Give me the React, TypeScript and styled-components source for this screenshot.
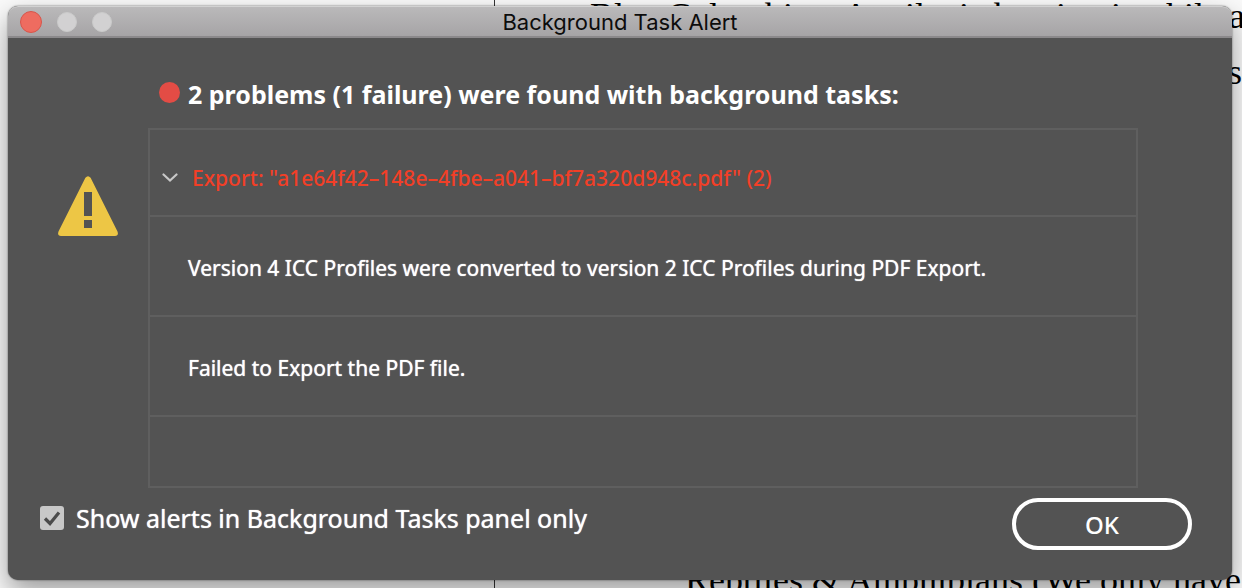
import React, { useState } from 'react';
import styled, { createGlobalStyle } from 'styled-components';

const GlobalStyle = createGlobalStyle`
  *, *::before, *::after { box-sizing: border-box; }
  body { margin: 0; background: #fafafa; }
`;

const Screen = styled.div`
  position: relative;
  min-height: 100vh;
  padding: 6px 10px 8px 8px;
  overflow: hidden;
  font-family: 'Noto Sans', 'Open Sans', sans-serif;
`;

/* The open document that the alert floats over. */
const Document = styled.div`
  position: absolute;
  inset: -12px 0 -20px 494px;
  display: flex;
  flex-direction: column;
  border-left: 1px solid #333;
  color: #000;
  font: 36px/56px 'Liberation Serif', serif;
  white-space: nowrap;
`;

const DocumentLine = styled.p<{ $indent?: number; $end?: boolean }>`
  margin: 0;
  padding-left: ${(p) => p.$indent ?? 0}px;
  text-align: ${(p) => (p.$end ? 'right' : 'left')};
`;

const DocumentHeading = styled(DocumentLine)`
  margin-top: auto;
`;

const Dialog = styled.section`
  position: relative;
  display: flex;
  flex-direction: column;
  border-radius: 10px;
  background: #535353;
  color: #fff;
  box-shadow: 0 0 2px rgba(0, 0, 0, 0.6), 0 12px 28px rgba(0, 0, 0, 0.38);
`;

const TitleBar = styled.header`
  display: grid;
  grid-template-columns: 1fr auto 1fr;
  align-items: center;
  height: 32px;
  padding: 0 12px;
  border-top: 1px solid #d2d2d2;
  border-bottom: 2px solid #8b898b;
  border-radius: 10px 10px 0 0;
  background: linear-gradient(#bab9ba, #a6a4a6);
`;

const WindowControls = styled.div`
  display: flex;
  align-items: center;
  gap: 15px;
`;

const WindowButton = styled.button<{ $close?: boolean }>`
  width: ${(p) => (p.$close ? 22 : 20)}px;
  height: ${(p) => (p.$close ? 22 : 20)}px;
  padding: 0;
  border: 1px solid ${(p) => (p.$close ? '#d8554b' : '#cacaca')};
  border-radius: 50%;
  background: ${(p) => (p.$close ? '#ee6c60' : '#d2d1d2')};
`;

const Title = styled.h1`
  margin: 0;
  color: #0c0c0c;
  font: 400 22px/28px Inter, sans-serif;
`;

const Content = styled.div`
  display: flex;
  gap: 30px;
  padding: 39px 94px 0 50px;
`;

const WarningIcon = styled.svg`
  flex: none;
  width: 60px;
  height: 60px;
  margin-top: 99px;
`;

const Main = styled.div`
  flex: 1;
  min-width: 0;
`;

const Summary = styled.h2`
  display: flex;
  align-items: center;
  gap: 8px;
  margin: 0 0 17px;
  padding-left: 11px;
  font-size: 25px;
  font-weight: 700;
  line-height: 34px;
`;

const StatusDot = styled.span`
  width: 21px;
  height: 21px;
  margin-bottom: 4px;
  border-radius: 50%;
  background: #e34c45;
`;

const ProblemList = styled.div`
  display: grid;
  grid-template-rows: 87px 100px 100px 69px;
  border: 2px solid #5f5f5f;
  font-size: 21px;
  line-height: 28px;
  text-shadow: 0 0 1px currentColor;
`;

const Row = styled.div`
  display: flex;
  align-items: center;
  padding: 4px 38px 0;
  border-bottom: 2px solid #5f5f5f;

  &:last-child { border-bottom: 0; }
`;

const TaskRow = styled(Row)`
  padding: 10px 12px 0;
`;

const TaskToggle = styled.button`
  display: flex;
  align-items: center;
  gap: 14px;
  padding: 0;
  border: 0;
  background: none;
  color: #f23f27;
  font: inherit;
  font-weight: 500;
  text-shadow: none;
`;

const Footer = styled.footer`
  display: flex;
  align-items: flex-start;
  justify-content: space-between;
  padding: 10px 40px 30px 32px;
`;

const CheckLabel = styled.label`
  display: flex;
  align-items: center;
  gap: 12px;
  padding-top: 3px;
  font-size: 25px;
  line-height: 34px;
  text-shadow: 0 0 1px currentColor;
`;

const CheckBox = styled.span`
  display: grid;

  > * { grid-area: 1 / 1; }
  svg { pointer-events: none; }
`;

const CheckInput = styled.input`
  appearance: none;
  width: 24px;
  height: 24px;
  margin: 0;
  border-radius: 3px;
  background: #c8c8c8;
`;

const OkButton = styled.button`
  width: 180px;
  height: 52px;
  padding: 2px 0 0;
  border: 4px solid #fff;
  border-radius: 26px;
  background: transparent;
  color: #fff;
  font: 500 24px/34px 'Noto Sans', sans-serif;
`;

export default function App() {
  const [open, setOpen] = useState(true);
  const [panelOnly, setPanelOnly] = useState(true);

  return (
    <Screen>
      <GlobalStyle />
      <Document>
        <DocumentLine $indent={95}>Blue Columbine, Aquilegia bearing it while a</DocumentLine>
        <DocumentLine $end>s</DocumentLine>
        <DocumentHeading $indent={190}>Reptiles &amp; Amphibians (We only have</DocumentHeading>
      </Document>

      <Dialog role="alertdialog" aria-labelledby="alert-title">
        <TitleBar>
          <WindowControls>
            <WindowButton $close aria-label="Close" />
            <WindowButton aria-label="Minimize" disabled />
            <WindowButton aria-label="Zoom" disabled />
          </WindowControls>
          <Title id="alert-title">Background Task Alert</Title>
        </TitleBar>

        <Content>
          <WarningIcon viewBox="0 0 60 60" aria-hidden="true">
            <path
              fill="#edc645"
              fillRule="evenodd"
              d="M27.4 1.8Q30-1.4 32.6 1.8L59.5 55.5Q61 60 57 60H3Q-1 60 .5 55.5ZM26 16V40H34V16ZM26 44V52H34V44Z"
            />
          </WarningIcon>
          <Main>
            <Summary>
              <StatusDot />
              2 problems (1 failure) were found with background tasks:
            </Summary>
            <ProblemList>
              <TaskRow>
                <TaskToggle aria-expanded={open} onClick={() => setOpen(!open)}>
                  <svg width="16" height="10" viewBox="0 0 16 10" aria-hidden="true">
                    <path d="M1.5 1.5L8 7.5L14.5 1.5" fill="none" stroke="#c8c8c8" strokeWidth="2.2" strokeLinecap="round" />
                  </svg>
                  Export: "a1e64f42–148e–4fbe–a041–bf7a320d948c.pdf" (2)
                </TaskToggle>
              </TaskRow>
              <Row>{open && 'Version 4 ICC Profiles were converted to version 2 ICC Profiles during PDF Export.'}</Row>
              <Row>{open && 'Failed to Export the PDF file.'}</Row>
              <Row />
            </ProblemList>
          </Main>
        </Content>

        <Footer>
          <CheckLabel>
            <CheckBox>
              <CheckInput type="checkbox" checked={panelOnly} onChange={(e) => setPanelOnly(e.target.checked)} />
              <svg width="24" height="24" viewBox="0 0 24 24" aria-hidden="true">
                {panelOnly && <path d="M5 12.5L10 17.5L19 6.5" fill="none" stroke="#4b4b4b" strokeWidth="3.2" />}
              </svg>
            </CheckBox>
            Show alerts in Background Tasks panel only
          </CheckLabel>
          <OkButton>OK</OkButton>
        </Footer>
      </Dialog>
    </Screen>
  );
}
